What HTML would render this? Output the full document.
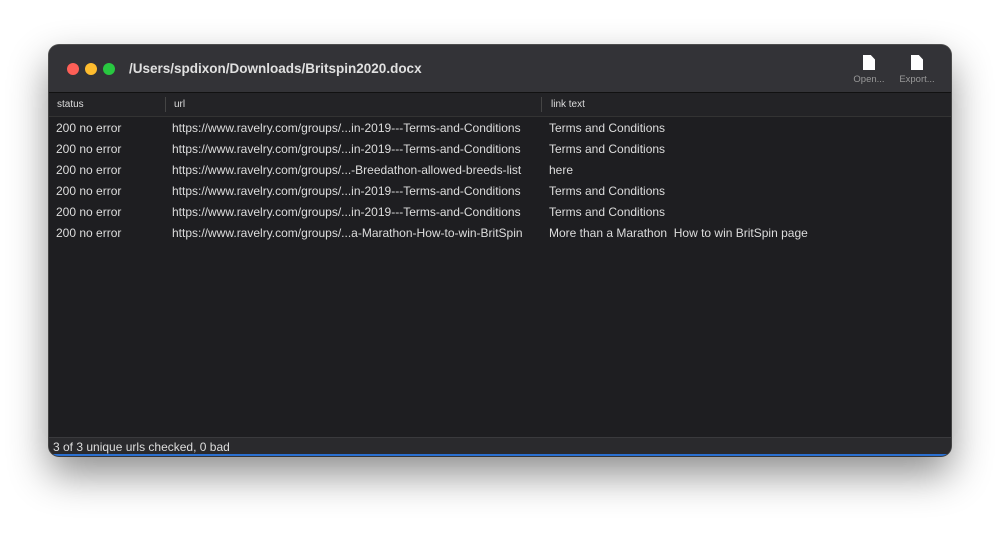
<!DOCTYPE html><html><head><style>
body{margin:0;width:1000px;height:534px;background:#fff;font-family:"Liberation Sans",sans-serif;position:relative;overflow:hidden}
.win{position:absolute;left:49px;top:45px;width:902px;height:411px;border-radius:10px;background:#1e1e21;overflow:hidden;box-shadow:0 18px 40px rgba(0,0,0,.45),0 0 0 1px #555}
.tb{position:absolute;left:0;top:0;width:902px;height:47px;background:#333337;border-bottom:1px solid #111}
.dot{position:absolute;top:18px;width:12px;height:12px;border-radius:50%}
.title{position:absolute;left:80px;top:16px;color:#e0e0e0;font-size:13.5px;font-weight:bold}
.btn{position:absolute;top:10px;color:#999;font-size:9.5px;text-align:center}
.doc{width:12px;height:15px;background:#fff;margin:0 auto 4px;clip-path:polygon(0 0,65% 0,100% 30%,100% 100%,0 100%)}
.hdr{position:absolute;top:48px;left:0;width:902px;height:23px;background:#232326;border-bottom:1px solid #333;color:#ddd;font-size:10px}
.hdr span{position:absolute;top:6px}
.sep{position:absolute;top:4px;width:1px;height:15px;background:#444}
.row{position:absolute;left:0;width:902px;height:21px;color:#ddd;font-size:12px}
.row span{position:absolute;top:2px;white-space:nowrap}
.sb{position:absolute;left:0;top:392px;width:902px;height:17px;background:#2a2a2d;border-top:1px solid #3a3a3d;color:#ddd;font-size:12px}
.sb span{position:absolute;left:4px;top:2px}
.blue{position:absolute;left:0;top:409px;width:902px;height:2px;background:#2a6fd0}
</style></head><body>
<div class="win">
<div class="tb">
<div class="dot" style="left:18px;background:#fe5f57"></div>
<div class="dot" style="left:36px;background:#febc2e"></div>
<div class="dot" style="left:54px;background:#28c840"></div>
<div class="title">/Users/spdixon/Downloads/Britspin2020.docx</div>
<div class="btn" style="left:800px;width:40px"><div class="doc"></div>Open...</div>
<div class="btn" style="left:846px;width:44px"><div class="doc"></div>Export...</div>
</div>
<div class="hdr"><span style="left:8px">status</span><div class="sep" style="left:116px"></div><span style="left:125px">url</span><div class="sep" style="left:492px"></div><span style="left:502px">link text</span></div>
<div class="row" style="top:74px"><span style="left:7px">200 no error</span><span style="left:123px">https://www.ravelry.com/groups/...in-2019---Terms-and-Conditions</span><span style="left:500px">Terms and Conditions</span></div>
<div class="row" style="top:95px"><span style="left:7px">200 no error</span><span style="left:123px">https://www.ravelry.com/groups/...in-2019---Terms-and-Conditions</span><span style="left:500px">Terms and Conditions</span></div>
<div class="row" style="top:116px"><span style="left:7px">200 no error</span><span style="left:123px">https://www.ravelry.com/groups/...-Breedathon-allowed-breeds-list</span><span style="left:500px">here</span></div>
<div class="row" style="top:137px"><span style="left:7px">200 no error</span><span style="left:123px">https://www.ravelry.com/groups/...in-2019---Terms-and-Conditions</span><span style="left:500px">Terms and Conditions</span></div>
<div class="row" style="top:158px"><span style="left:7px">200 no error</span><span style="left:123px">https://www.ravelry.com/groups/...in-2019---Terms-and-Conditions</span><span style="left:500px">Terms and Conditions</span></div>
<div class="row" style="top:179px"><span style="left:7px">200 no error</span><span style="left:123px">https://www.ravelry.com/groups/...a-Marathon-How-to-win-BritSpin</span><span style="left:500px">More than a Marathon&nbsp; How to win BritSpin page</span></div>
<div class="sb"><span>3 of 3 unique urls checked, 0 bad</span></div>
<div class="blue"></div>
</div>
</body></html>
